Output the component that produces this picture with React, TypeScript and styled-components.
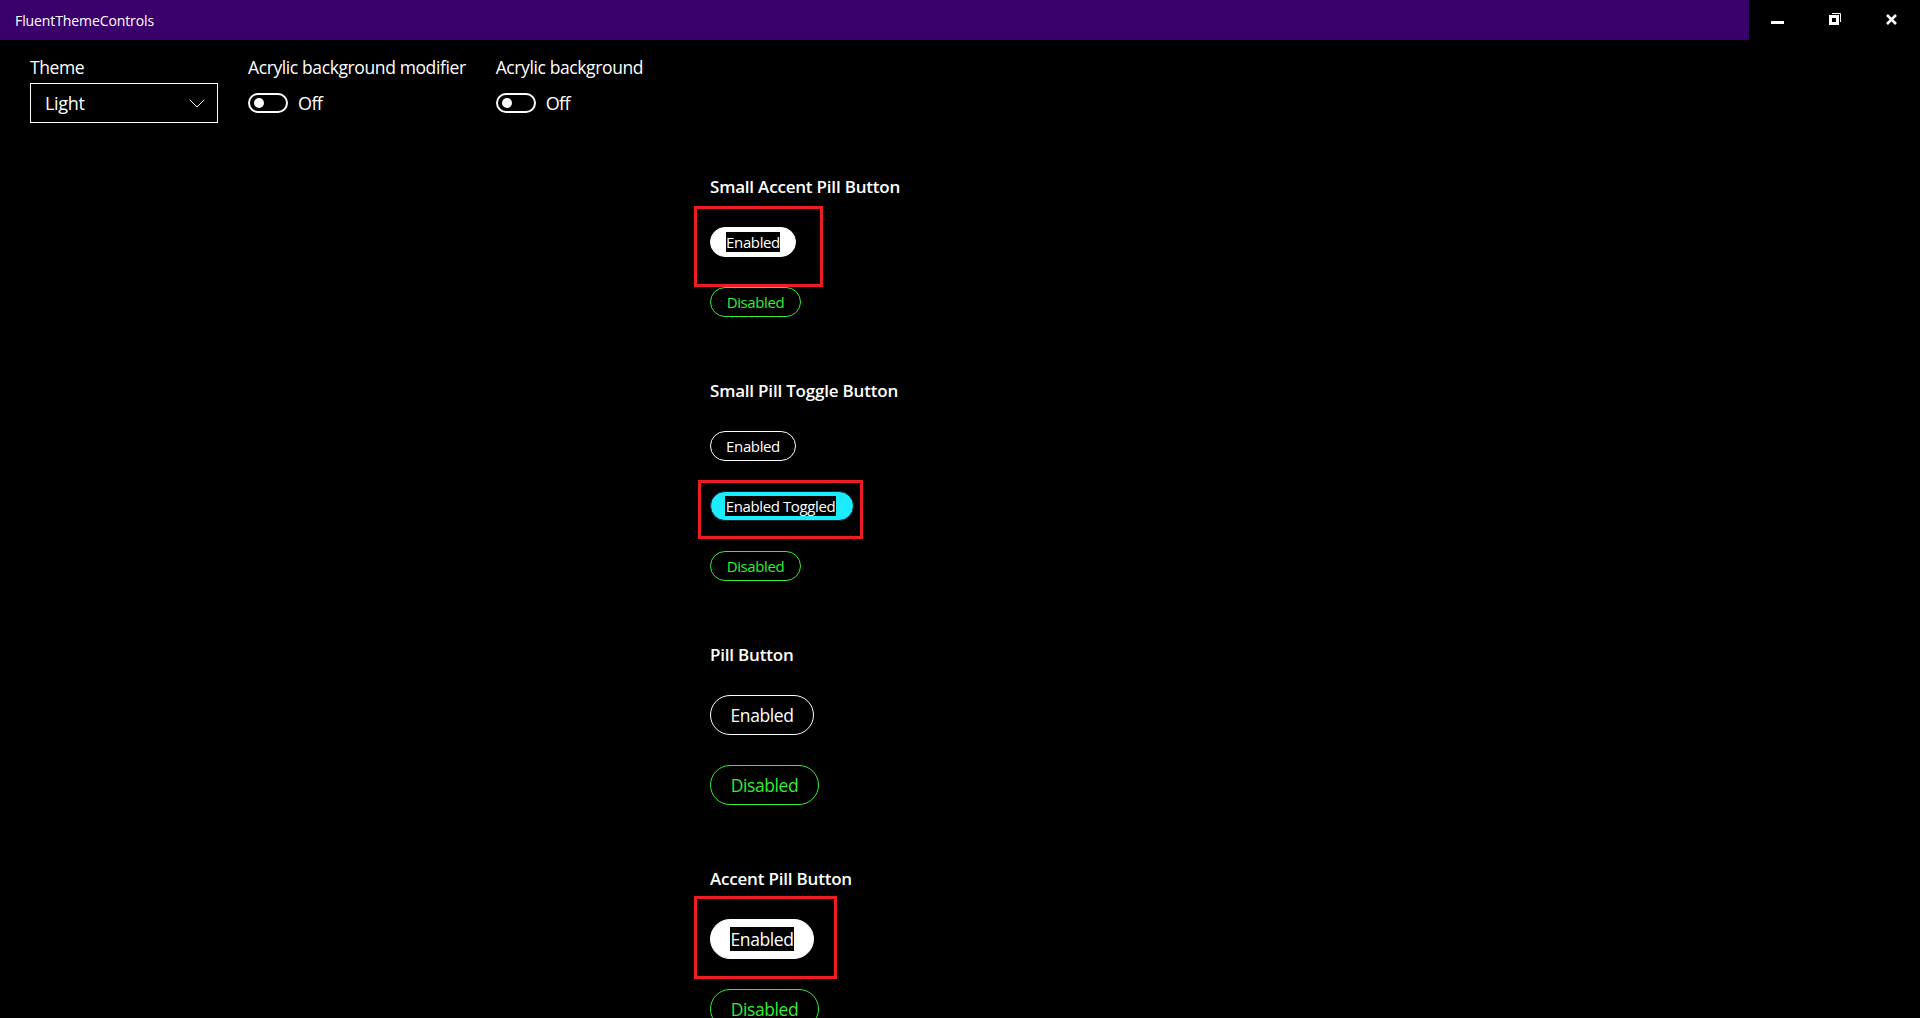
import styled, { createGlobalStyle } from "styled-components";

const GlobalStyle = createGlobalStyle`
  html, body {
    margin: 0;
    height: 100%;
    background: #000;
  }
  body {
    font-family: "Open Sans", "Noto Sans", sans-serif;
    color: #fff;
    overflow: hidden;
  }
`;

const Page = styled.div`
  height: 100vh;
  overflow: hidden;
  background: #000;
`;

const TitleBar = styled.header`
  display: flex;
  height: 40px;
`;

const TitleArea = styled.div`
  flex: 1;
  display: flex;
  align-items: center;
  padding-left: 15px;
  background: #39006b;
  font-size: 14px;
  letter-spacing: -0.1px;
`;

const WindowButtons = styled.div`
  display: flex;
  width: 171px;
  background: #000;
`;

const WindowButton = styled.div`
  flex: 1;
  display: flex;
  align-items: center;
  justify-content: center;
  padding-bottom: 2px;
  svg {
    display: block;
  }
`;

const Settings = styled.div`
  display: flex;
  gap: 30px;
  padding: 15px 0 0 30px;
`;

const Field = styled.div`
  display: flex;
  flex-direction: column;
  gap: 4px;
`;

const FieldLabel = styled.label`
  font-size: 17.5px;
  line-height: 24px;
  white-space: nowrap;
  letter-spacing: -0.39px;
`;

const ComboBox = styled.div`
  box-sizing: border-box;
  display: flex;
  align-items: center;
  justify-content: space-between;
  width: 188px;
  height: 40px;
  padding: 0 12px 0 14px;
  border: 1px solid #fff;
  font-size: 18px;
  letter-spacing: -0.3px;
`;

const SwitchRow = styled.div`
  display: flex;
  align-items: center;
  gap: 10px;
  height: 40px;
  font-size: 18px;
  letter-spacing: -0.6px;
`;

const SwitchTrack = styled.div`
  box-sizing: border-box;
  display: flex;
  align-items: center;
  width: 40px;
  height: 20px;
  padding-left: 4px;
  border: 2px solid #fff;
  border-radius: 10px;
`;

const SwitchThumb = styled.div`
  width: 10px;
  height: 10px;
  border-radius: 50%;
  background: #fff;
`;

const Content = styled.main`
  display: flex;
  flex-direction: column;
  gap: 62px;
  padding: 52px 0 0 710px;
`;

const Section = styled.section`
  display: flex;
  flex-direction: column;
  align-items: flex-start;
`;

const SectionTitle = styled.h2`
  margin: 0 0 28px;
  font-size: 17px;
  font-weight: 600;
  line-height: 24px;
  white-space: nowrap;
  letter-spacing: -0.2px;
`;

const Stack = styled.div`
  display: flex;
  flex-direction: column;
  align-items: flex-start;
  gap: 30px;
`;

const Pill = styled.div<{
  $width: number;
  $large?: boolean;
  $variant: "outline" | "accent" | "toggled" | "disabled";
}>`
  box-sizing: border-box;
  display: flex;
  align-items: center;
  justify-content: center;
  width: ${(p) => p.$width}px;
  height: ${(p) => (p.$large ? 40 : 30)}px;
  padding-right: ${(p) => (p.$variant === "toggled" ? 3 : 0)}px;
  border-radius: ${(p) => (p.$large ? 20 : 15)}px;
  font-size: ${(p) => (p.$large ? 17.5 : 15)}px;
  letter-spacing: ${(p) => (p.$large ? -0.4 : -0.38)}px;
  white-space: nowrap;
  border: 1px solid
    ${(p) =>
      p.$variant === "disabled"
        ? "#33ee33"
        : p.$variant === "toggled"
          ? "#0c2a30"
          : "#fff"};
  color: ${(p) => (p.$variant === "disabled" ? "#33ee33" : "#fff")};
  background: ${(p) =>
    p.$variant === "accent"
      ? "#fff"
      : p.$variant === "toggled"
        ? "#1aebff"
        : "transparent"};
`;

const PillText = styled.span<{ $large?: boolean; $width: number }>`
  display: block;
  width: ${(p) => p.$width}px;
  height: ${(p) => (p.$large ? 24 : 20)}px;
  line-height: ${(p) => (p.$large ? 24 : 20)}px;
  text-align: center;
  background: #000;
`;

/* red rectangle that lies over a focused button */
const Focused = styled.div<{ $top: number; $right: number; $bottom: number; $left: number }>`
  position: relative;
  &::after {
    content: "";
    position: absolute;
    top: ${(p) => -p.$top}px;
    right: ${(p) => -p.$right}px;
    bottom: ${(p) => -p.$bottom}px;
    left: ${(p) => -p.$left}px;
    border: 3px solid #f01c24;
    pointer-events: none;
  }
`;

const Chevron = () => (
  <svg width="16" height="9" viewBox="0 0 16 9" fill="none">
    <path d="M0.7 0.7 L8 8 L15.3 0.7" stroke="#fff" strokeWidth="1" />
  </svg>
);

const MinimizeIcon = () => (
  <svg width="13" height="3" viewBox="0 0 13 3" style={{ marginTop: 7 }}>
    <rect width="13" height="3" fill="#fff" />
  </svg>
);

const RestoreIcon = () => (
  <svg width="12" height="12" viewBox="0 0 12 12" fill="none">
    <path d="M3 0.5 H11.5 V9" stroke="#fff" strokeWidth="1" />
    <rect x="1.5" y="3.5" width="7" height="7" stroke="#fff" strokeWidth="3" />
  </svg>
);

const CloseIcon = () => (
  <svg width="11" height="11" viewBox="0 0 11 11" fill="none">
    <path d="M1 1 L10 10 M10 1 L1 10" stroke="#fff" strokeWidth="2.6" />
  </svg>
);

const Toggle = () => (
  <SwitchRow>
    <SwitchTrack>
      <SwitchThumb />
    </SwitchTrack>
    Off
  </SwitchRow>
);

const App = () => {
  return (
    <Page>
      <GlobalStyle />
      <TitleBar>
        <TitleArea>FluentThemeControls</TitleArea>
        <WindowButtons>
          <WindowButton>
            <MinimizeIcon />
          </WindowButton>
          <WindowButton>
            <RestoreIcon />
          </WindowButton>
          <WindowButton>
            <CloseIcon />
          </WindowButton>
        </WindowButtons>
      </TitleBar>

      <Settings>
        <Field>
          <FieldLabel>Theme</FieldLabel>
          <ComboBox>
            Light
            <Chevron />
          </ComboBox>
        </Field>
        <Field>
          <FieldLabel>Acrylic background modifier</FieldLabel>
          <Toggle />
        </Field>
        <Field>
          <FieldLabel>Acrylic background</FieldLabel>
          <Toggle />
        </Field>
      </Settings>

      <Content>
        <Section>
          <SectionTitle>Small Accent Pill Button</SectionTitle>
          <Stack>
            <Focused $top={21} $right={27} $bottom={30} $left={16}>
              <Pill $variant="accent" $width={86}>
                <PillText $width={54}>Enabled</PillText>
              </Pill>
            </Focused>
            <Pill $variant="disabled" $width={91}>
              Disabled
            </Pill>
          </Stack>
        </Section>

        <Section>
          <SectionTitle>Small Pill Toggle Button</SectionTitle>
          <Stack>
            <Pill $variant="outline" $width={86}>
              Enabled
            </Pill>
            <Focused $top={11} $right={9} $bottom={18} $left={12}>
              <Pill $variant="toggled" $width={144}>
                <PillText $width={111}>Enabled Toggled</PillText>
              </Pill>
            </Focused>
            <Pill $variant="disabled" $width={91}>
              Disabled
            </Pill>
          </Stack>
        </Section>

        <Section>
          <SectionTitle>Pill Button</SectionTitle>
          <Stack>
            <Pill $variant="outline" $large $width={104}>
              Enabled
            </Pill>
            <Pill $variant="disabled" $large $width={109}>
              Disabled
            </Pill>
          </Stack>
        </Section>

        <Section>
          <SectionTitle>Accent Pill Button</SectionTitle>
          <Stack>
            <Focused $top={23} $right={23} $bottom={20} $left={16}>
              <Pill $variant="accent" $large $width={104}>
                <PillText $large $width={64}>
                  Enabled
                </PillText>
              </Pill>
            </Focused>
            <Pill $variant="disabled" $large $width={109}>
              Disabled
            </Pill>
          </Stack>
        </Section>
      </Content>
    </Page>
  );
};

export default App;
